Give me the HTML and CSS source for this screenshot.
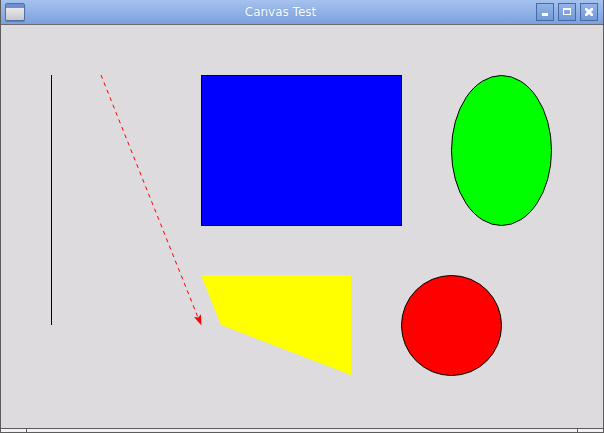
FILE: index.html
```html
<!DOCTYPE html>
<html>
<head>
<meta charset="utf-8">
<link rel="stylesheet" href="styles.css">
</head>
<body>
<div class="window">
  <div class="titlebar">
    <div class="app-icon"><div class="app-icon-band"></div></div>
    <div class="title">Canvas Test</div>
    <div class="buttons">
      <div class="btn"><svg width="16" height="16" viewBox="0 0 16 16"><rect x="5" y="9" width="6" height="3" fill="#fff"/></svg></div>
      <div class="btn"><svg width="16" height="16" viewBox="0 0 16 16"><rect x="4.5" y="4.5" width="7" height="6" fill="none" stroke="#fff" stroke-width="1"/><rect x="4" y="4" width="8" height="2" fill="#fff"/></svg></div>
      <div class="btn"><svg width="16" height="16" viewBox="0 0 16 16"><path d="M4 4h2l2 2 2-2h2v2l-2 2 2 2v2h-2l-2-2-2 2H4v-2l2-2-2-2z" fill="#fff"/></svg></div>
    </div>
  </div>
  <div class="canvas">
    <svg class="drawing" width="602" height="403" viewBox="0 0 602 403">
      <line x1="50.5" y1="50" x2="50.5" y2="300" stroke="#000" stroke-width="1"/>
      <line x1="100" y1="50" x2="197.03" y2="292.57" stroke="#ff0000" stroke-width="1" stroke-dasharray="4 4"/>
      <polygon points="200.5,300.5 199.9,289.2 197.3,292.6 193.0,291.9" fill="#ff0000"/>
      <rect x="200.5" y="50.5" width="200" height="150" fill="#0000ff" stroke="#000" stroke-width="1"/>
      <ellipse cx="500.5" cy="125.5" rx="50" ry="75" fill="#00ff00" stroke="#000" stroke-width="1"/>
      <polygon points="200,250 350,250 350,350 220,300" fill="#ffff00"/>
      <circle cx="450.5" cy="300.5" r="50" fill="#ff0000" stroke="#000" stroke-width="1"/>
    </svg>
  </div>
  <div class="statusframe">
    <div class="seg seg-left"></div>
    <div class="seg seg-mid"></div>
    <div class="seg seg-right"></div>
  </div>
</div>
</body>
</html>
```
FILE: styles.css
```css
html, body {
  margin: 0;
  padding: 0;
  background: #dddbdd;
}
.window {
  width: 604px;
  height: 433px;
  box-sizing: border-box;
  border-left: 1px solid #5c5c5c;
  border-right: 1px solid #5c5c5c;
  display: flex;
  flex-direction: column;
  overflow: hidden;
}
.titlebar {
  height: 24px;
  border-bottom: 1px solid #6a6a6a;
  background: linear-gradient(#a6c2ee, #7ba1de);
  display: flex;
  align-items: center;
  flex: none;
}
.app-icon {
  width: 18px;
  height: 16px;
  margin-left: 4px;
  border: 1px solid #4f6fa8;
  border-radius: 2px;
  background: linear-gradient(#f4f4f6, #c8c8cc);
  display: flex;
  flex-direction: column;
  box-shadow: 0 1px 1px rgba(40,60,110,0.4);
}
.app-icon-band {
  height: 4px;
  background: #6c8fd0;
}
.title {
  flex: 1;
  text-align: center;
  color: #ffffff;
  font-family: "DejaVu Sans", sans-serif;
  font-size: 12px;
  text-shadow: 0 0 1px rgba(60,90,150,0.5);
}
.buttons {
  display: flex;
  gap: 4px;
  margin-right: 5px;
}
.btn {
  width: 16px;
  height: 16px;
  border: 1px solid #4a6aa6;
  background: linear-gradient(#92b3e8, #7299da);
  display: flex;
}
.canvas {
  height: 403px;
  flex: none;
  background: #dddbdd;
}
.drawing {
  display: block;
}
.statusframe {
  height: 3px;
  border-top: 1px solid #5c5c5c;
  border-bottom: 1px solid #5c5c5c;
  background: #f2f2f2;
  display: flex;
  flex: none;
}
.seg-left {
  width: 25px;
  border-right: 1px solid #5c5c5c;
}
.seg-mid {
  flex: 1;
  border-right: 1px solid #5c5c5c;
}
.seg-right {
  width: 25px;
}
```
